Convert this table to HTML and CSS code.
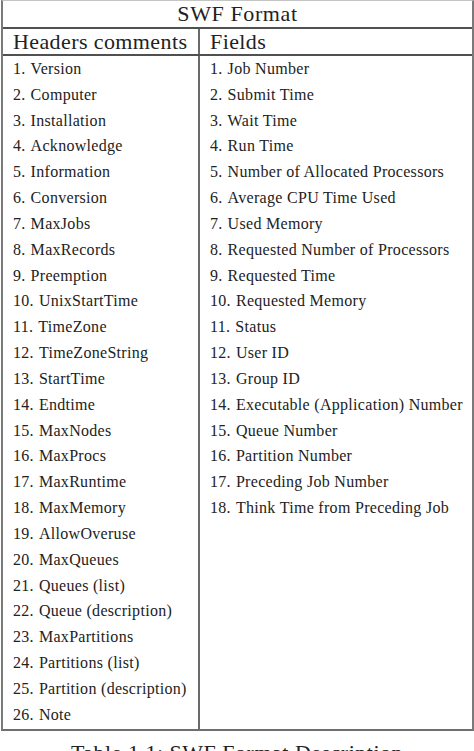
FILE: index.html
```html
<!DOCTYPE html>
<html>
<head>
<meta charset="utf-8">
<link rel="stylesheet" href="styles.css">
</head>
<body>
<div class="frame">
  <div class="title">SWF Format</div>
  <div class="head">
    <div class="hcell">Headers comments</div>
    <div class="hcell divider">Fields</div>
  </div>
  <div class="body">
    <div class="col">
      <div class="row"><span class="num">1.</span>Version</div>
      <div class="row"><span class="num">2.</span>Computer</div>
      <div class="row"><span class="num">3.</span>Installation</div>
      <div class="row"><span class="num">4.</span>Acknowledge</div>
      <div class="row"><span class="num">5.</span>Information</div>
      <div class="row"><span class="num">6.</span>Conversion</div>
      <div class="row"><span class="num">7.</span>MaxJobs</div>
      <div class="row"><span class="num">8.</span>MaxRecords</div>
      <div class="row"><span class="num">9.</span>Preemption</div>
      <div class="row"><span class="num">10.</span>UnixStartTime</div>
      <div class="row"><span class="num">11.</span>TimeZone</div>
      <div class="row"><span class="num">12.</span>TimeZoneString</div>
      <div class="row"><span class="num">13.</span>StartTime</div>
      <div class="row"><span class="num">14.</span>Endtime</div>
      <div class="row"><span class="num">15.</span>MaxNodes</div>
      <div class="row"><span class="num">16.</span>MaxProcs</div>
      <div class="row"><span class="num">17.</span>MaxRuntime</div>
      <div class="row"><span class="num">18.</span>MaxMemory</div>
      <div class="row"><span class="num">19.</span>AllowOveruse</div>
      <div class="row"><span class="num">20.</span>MaxQueues</div>
      <div class="row"><span class="num">21.</span>Queues (list)</div>
      <div class="row"><span class="num">22.</span>Queue (description)</div>
      <div class="row"><span class="num">23.</span>MaxPartitions</div>
      <div class="row"><span class="num">24.</span>Partitions (list)</div>
      <div class="row"><span class="num">25.</span>Partition (description)</div>
      <div class="row"><span class="num">26.</span>Note</div>
    </div>
    <div class="col divider">
      <div class="row"><span class="num">1.</span>Job Number</div>
      <div class="row"><span class="num">2.</span>Submit Time</div>
      <div class="row"><span class="num">3.</span>Wait Time</div>
      <div class="row"><span class="num">4.</span>Run Time</div>
      <div class="row"><span class="num">5.</span>Number of Allocated Processors</div>
      <div class="row"><span class="num">6.</span>Average CPU Time Used</div>
      <div class="row"><span class="num">7.</span>Used Memory</div>
      <div class="row"><span class="num">8.</span>Requested Number of Processors</div>
      <div class="row"><span class="num">9.</span>Requested Time</div>
      <div class="row"><span class="num">10.</span>Requested Memory</div>
      <div class="row"><span class="num">11.</span>Status</div>
      <div class="row"><span class="num">12.</span>User ID</div>
      <div class="row"><span class="num">13.</span>Group ID</div>
      <div class="row"><span class="num">14.</span>Executable (Application) Number</div>
      <div class="row"><span class="num">15.</span>Queue Number</div>
      <div class="row"><span class="num">16.</span>Partition Number</div>
      <div class="row"><span class="num">17.</span>Preceding Job Number</div>
      <div class="row"><span class="num">18.</span>Think Time from Preceding Job</div>
    </div>
  </div>
</div>
<div class="caption">Table 1.1: SWF Format Description</div>
</body>
</html>
```
FILE: styles.css
```css
html, body {
  margin: 0;
  padding: 0;
  background: #ffffff;
}
body {
  font-family: "Liberation Serif", "DejaVu Serif", serif;
  color: #222222;
  width: 474px;
  overflow: hidden;
}
.frame {
  margin-left: 1px;
  width: 469px;
  border-top: 1px solid #c4c4c4;
  border-left: 2px solid #7a7a7a;
  border-right: 2px solid #7a7a7a;
  border-bottom: 2px solid #6e6e6e;
}
.title {
  height: 26px;
  line-height: 26px;
  text-align: center;
  font-size: 22px;
  letter-spacing: 0.6px;
  border-bottom: 2px solid #505050;
}
.head {
  display: grid;
  grid-template-columns: 195px 1fr;
  height: 25px;
  border-bottom: 2px solid #505050;
}
.hcell {
  padding-left: 10px;
  font-size: 22px;
  letter-spacing: 0.4px;
  line-height: 25px;
}
.divider {
  border-left: 2px solid #6a6a6a;
}
.body {
  display: grid;
  grid-template-columns: 195px 1fr;
}
.col {
  padding-left: 10px;
  padding-bottom: 1px;
}
.row {
  height: 25.84px;
  line-height: 25.84px;
  font-size: 16px;
  letter-spacing: 0.3px;
  white-space: nowrap;
}
.num {
  margin-right: 5px;
}
.caption {
  margin-top: 9px;
  text-align: center;
  font-size: 22px;
  letter-spacing: 0.5px;
}
```
